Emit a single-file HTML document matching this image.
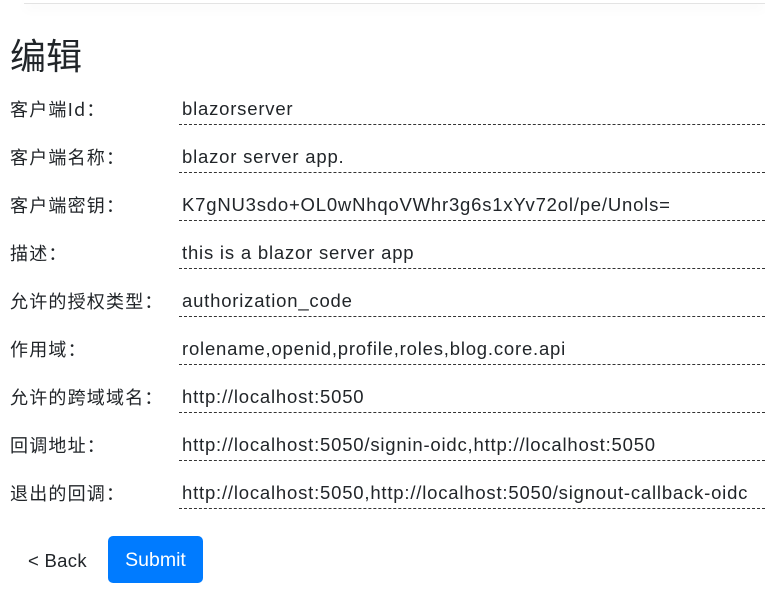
<!DOCTYPE html>
<html><head><meta charset="utf-8"><style>
body{margin:0;width:765px;height:603px;overflow:hidden;background:#fff;font-family:"Liberation Sans","Noto Sans CJK SC",sans-serif;color:#212529;}
.top{position:absolute;left:24px;top:0;right:0;height:3px;border-bottom:1px solid #e3e3e3;box-shadow:0 4px 12px rgba(0,0,0,0.05);}
h1{position:absolute;left:10px;top:30px;margin:0;font-size:36px;font-weight:400;line-height:48px;font-family:"Noto Sans CJK SC",sans-serif;}
.row{position:absolute;left:0;width:765px;height:32px;}
.lab{position:absolute;left:10px;top:4px;font-size:18px;letter-spacing:1.2px;font-family:"Noto Sans CJK SC",sans-serif;line-height:24px;}
.val{position:absolute;left:179px;right:0;top:1px;height:30px;border-bottom:1px dashed #333;font-size:18.5px;letter-spacing:0.8px;line-height:30px;padding-left:3px;white-space:nowrap;overflow:hidden;}
.back{position:absolute;left:28px;top:549px;font-size:18.5px;letter-spacing:0.3px;line-height:24px;}
.btn{position:absolute;left:108px;top:536px;width:95px;height:47px;background:#007bff;border-radius:5px;color:#fff;font-size:19.5px;line-height:49px;text-align:center;}
</style></head><body>
<div class="top"></div>
<h1>编辑</h1>
<div class="row" style="top:93px"><div class="lab">客户端Id：</div><div class="val">blazorserver</div></div>
<div class="row" style="top:141px"><div class="lab">客户端名称：</div><div class="val">blazor server app.</div></div>
<div class="row" style="top:189px"><div class="lab">客户端密钥：</div><div class="val">K7gNU3sdo+OL0wNhqoVWhr3g6s1xYv72ol/pe/Unols=</div></div>
<div class="row" style="top:237px"><div class="lab">描述：</div><div class="val">this is a blazor server app</div></div>
<div class="row" style="top:285px"><div class="lab">允许的授权类型：</div><div class="val">authorization_code</div></div>
<div class="row" style="top:333px"><div class="lab">作用域：</div><div class="val">rolename,openid,profile,roles,blog.core.api</div></div>
<div class="row" style="top:381px"><div class="lab">允许的跨域域名：</div><div class="val">http://localhost:5050</div></div>
<div class="row" style="top:429px"><div class="lab">回调地址：</div><div class="val">http://localhost:5050/signin-oidc,http://localhost:5050</div></div>
<div class="row" style="top:477px"><div class="lab">退出的回调：</div><div class="val">http://localhost:5050,http://localhost:5050/signout-callback-oidc</div></div>
<div class="back">&lt; Back</div>
<div class="btn">Submit</div>
</body></html>
